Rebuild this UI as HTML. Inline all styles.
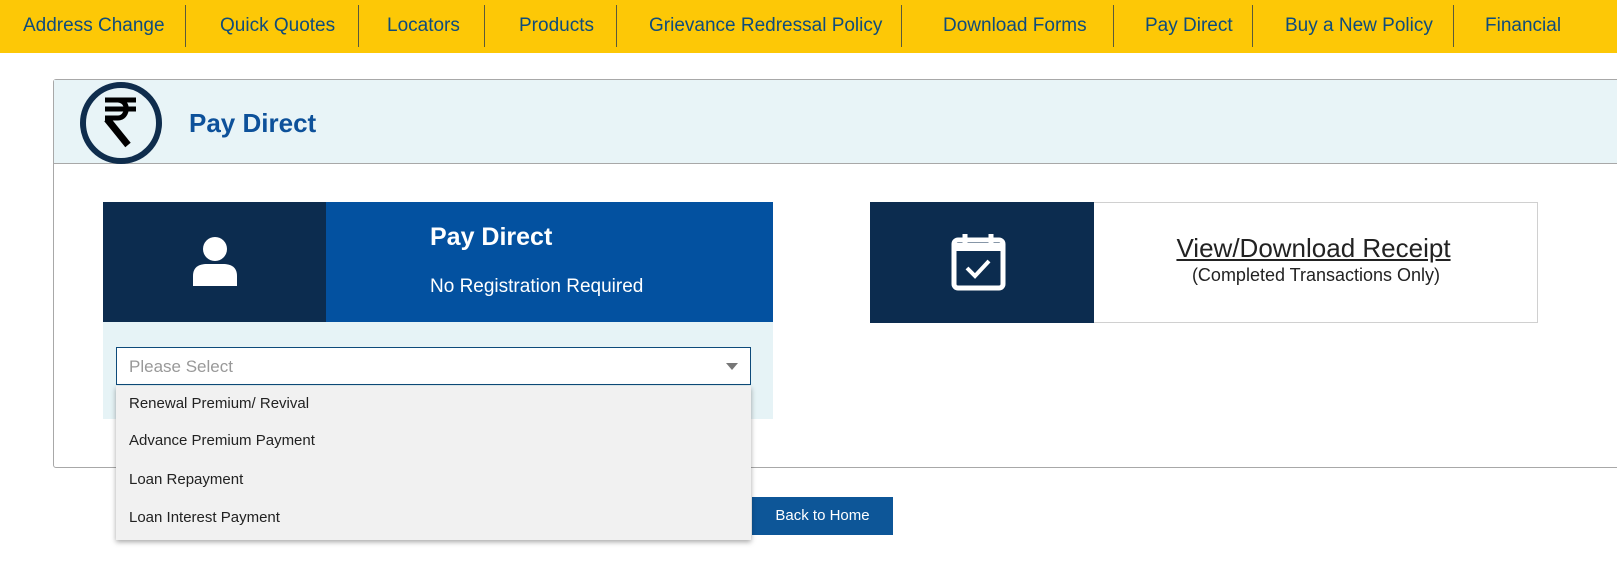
<!DOCTYPE html>
<html><head><style>
*{box-sizing:border-box;margin:0;padding:0}
body{width:1617px;height:586px;background:#fff;font-family:"Liberation Sans",sans-serif;position:relative;overflow:hidden}
.nav{position:absolute;left:0;top:0;width:1617px;height:53px;background:#fdc806}
.nav span{position:absolute;top:15px;font-size:19px;color:#0f4c7c;white-space:nowrap}
.sep{position:absolute;top:5px;width:1px;height:42px;background:#5a5a3a}
.panel{position:absolute;left:53px;top:79px;width:1600px;height:389px;border:1px solid #a8a8a8;border-radius:3px}
.hdr{position:absolute;left:0;top:0;right:0;height:84px;background:#e8f4f7;border-bottom:1px solid #a8a8a8}
.abs{position:absolute}
</style></head><body>
<div class="nav">
<span style="left:23px">Address Change</span><div class="sep" style="left:185px"></div>
<span style="left:220px">Quick Quotes</span><div class="sep" style="left:358px"></div>
<span style="left:387px">Locators</span><div class="sep" style="left:484px"></div>
<span style="left:519px">Products</span><div class="sep" style="left:616px"></div>
<span style="left:649px">Grievance Redressal Policy</span><div class="sep" style="left:901px"></div>
<span style="left:943px">Download Forms</span><div class="sep" style="left:1113px"></div>
<span style="left:1145px">Pay Direct</span><div class="sep" style="left:1252px"></div>
<span style="left:1285px">Buy a New Policy</span><div class="sep" style="left:1453px"></div>
<span style="left:1485px">Financial</span>
</div>
<div class="panel"><div class="hdr">
<svg class="abs" style="left:24px;top:1px" width="86" height="86" viewBox="0 0 86 86">
<circle cx="43" cy="42" r="38" fill="none" stroke="#0f2d4d" stroke-width="6"/>
<path d="M27 19H58M27 28H58" stroke="#000" stroke-width="5"/>
<path d="M27 37H40C50 37 52 20 40 19" fill="none" stroke="#000" stroke-width="5"/>
<path d="M29 38L50 64" stroke="#000" stroke-width="7"/>
</svg>
<div class="abs" style="left:135px;top:28px;font-size:26px;font-weight:bold;color:#0d519a">Pay Direct</div>
</div></div>
<div class="abs" style="left:103px;top:202px;width:670px;height:217px;background:#e6f3f6"></div>
<div class="abs" style="left:103px;top:202px;width:223px;height:120px;background:#0c2c4f">
<svg class="abs" style="left:88px;top:34px" width="48" height="52" viewBox="0 0 48 52"><circle cx="24" cy="13" r="12" fill="#fff"/><path d="M2 50V40C2 31 8 28 16 28H32C40 28 46 31 46 40V50Z" fill="#fff"/></svg>
</div>
<div class="abs" style="left:326px;top:202px;width:447px;height:120px;background:#0351a0;color:#fff">
<div class="abs" style="left:104px;top:21px;font-size:25px;font-weight:bold">Pay Direct</div>
<div class="abs" style="left:104px;top:74px;font-size:19px">No Registration Required</div>
</div>
<div class="abs" style="left:116px;top:347px;width:635px;height:38px;border:1px solid #0d4a7a;background:#fff">
<div class="abs" style="left:12px;top:9px;font-size:17px;color:#999">Please Select</div>
<div class="abs" style="left:609px;top:15px;border-left:6px solid transparent;border-right:6px solid transparent;border-top:7px solid #777"></div>
</div>
<div class="abs" style="left:752px;top:497px;width:141px;height:38px;background:#0d5698;color:#fff;font-size:15px;text-align:center;line-height:38px">Back to Home</div>
<div class="abs" style="left:116px;top:386px;width:635px;height:154px;background:#f1f1f1;box-shadow:0 2px 5px rgba(0,0,0,.35);font-size:15px;color:#222">
<div class="abs" style="left:13px;top:9px">Renewal Premium/ Revival</div>
<div class="abs" style="left:13px;top:46px">Advance Premium Payment</div>
<div class="abs" style="left:13px;top:85px">Loan Repayment</div>
<div class="abs" style="left:13px;top:123px">Loan Interest Payment</div>
</div>
<div class="abs" style="left:870px;top:202px;width:668px;height:121px;border:1px solid #d0d0d0;background:#fff">
<div class="abs" style="left:-1px;top:-1px;width:224px;height:121px;background:#0c2c4f">
<svg class="abs" style="left:80px;top:30px" width="60" height="60" viewBox="0 0 60 60"><rect x="4" y="8" width="49" height="48" rx="4" fill="none" stroke="#fff" stroke-width="5"/><path d="M4 15H53" stroke="#fff" stroke-width="8"/><path d="M15 2V15M41 2V15" stroke="#fff" stroke-width="5"/><path d="M17 36L25 44L39 29" fill="none" stroke="#fff" stroke-width="4"/></svg>
</div>
<div class="abs" style="left:223px;top:30px;width:444px;text-align:center;color:#222">
<div style="font-size:26px;text-decoration:underline;margin-left:-5px">View/Download Receipt</div>
<div style="font-size:18px;margin-top:1px">(Completed Transactions Only)</div>
</div>
</div>
</body></html>
